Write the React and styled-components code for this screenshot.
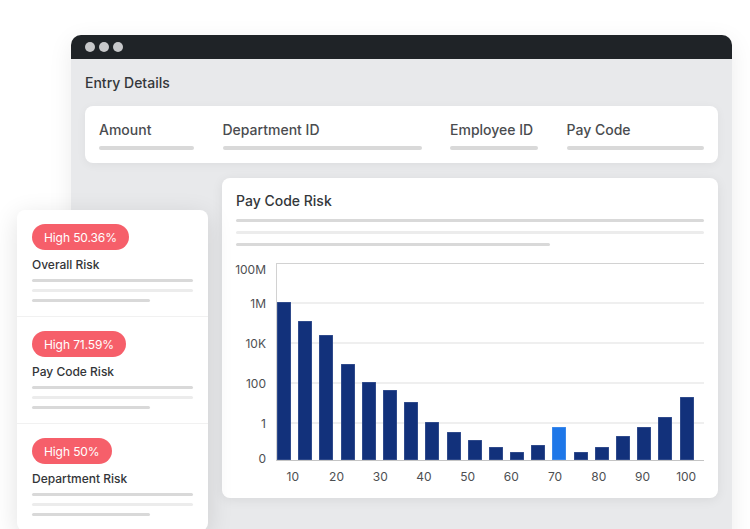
import React from 'react';
import styled, { createGlobalStyle } from 'styled-components';

const GlobalStyle = createGlobalStyle`
  html, body { margin: 0; padding: 0; background: #ffffff; }
  body { font-family: Inter, "Noto Sans", "Liberation Sans", sans-serif; }
  * { box-sizing: border-box; }
`;

const fields = [
  { label: 'Amount' },
  { label: 'Department ID' },
  { label: 'Employee ID' },
  { label: 'Pay Code' },
];

const risks = [
  { badge: 'High 50.36%', title: 'Overall Risk' },
  { badge: 'High 71.59%', title: 'Pay Code Risk' },
  { badge: 'High 50%', title: 'Department Risk' },
];

// bar heights in px above the baseline (log scale)
const bars = [158, 139, 125, 96, 78, 70, 58, 38, 28, 20, 13, 8, 15, 33, 8, 13, 24, 33, 43, 63];
const highlight = 13;

const yTicks = [
  { label: '100M', y: 7 },
  { label: '1M', y: 41 },
  { label: '10K', y: 81 },
  { label: '100', y: 121 },
  { label: '1', y: 161 },
  { label: '0', y: 196 },
];

const xTicks = [10, 20, 30, 40, 50, 60, 70, 80, 90, 100];

const App = () => {
  return (
    <Page>
      <GlobalStyle />
      <Window>
        <TitleBar>
          <Dot />
          <Dot />
          <Dot />
        </TitleBar>
        <Body>
          <Heading>Entry Details</Heading>
          <FieldCard>
            {fields.map((f) => (
              <Field key={f.label}>
                <FieldLabel>{f.label}</FieldLabel>
                <Line />
              </Field>
            ))}
          </FieldCard>
          <ChartCard>
            <CardTitle>Pay Code Risk</CardTitle>
            <Line $mt={9} />
            <Line $mt={9} $light $h={3} />
            <Line $mt={9} $w="314px" />
            <Chart>
              <YAxis>
                {yTicks.map((t) => (
                  <YTick key={t.label} $y={t.y}>{t.label}</YTick>
                ))}
              </YAxis>
              <PlotWrap>
                <Plot>
                  {bars.map((h, i) => (
                    <Bar key={i} $active={i === highlight} style={{ height: h }} />
                  ))}
                </Plot>
                <XAxis>
                  {xTicks.map((t) => (
                    <XTick key={t}>{t}</XTick>
                  ))}
                </XAxis>
              </PlotWrap>
            </Chart>
          </ChartCard>
        </Body>
      </Window>

      <RiskCard>
        {risks.map((r) => (
          <RiskSection key={r.title}>
            <Badge>{r.badge}</Badge>
            <RiskTitle>{r.title}</RiskTitle>
            <Line $mt={6} $h={3} />
            <Line $mt={7} $h={3} $light />
            <Line $mt={7} $h={3} $w="118px" />
          </RiskSection>
        ))}
      </RiskCard>
    </Page>
  );
};

export default App;

const Page = styled.div`
  position: relative;
  width: 750px;
  height: 529px;
  overflow: hidden;
  padding: 35px 0 0 71px;
  background: #ffffff;
`;

const Window = styled.div`
  width: 661px;
  height: 520px;
  border-radius: 10px 10px 0 0;
  background: #e8e9eb;
  box-shadow: 0 6px 24px rgba(0, 0, 0, 0.08);
  overflow: hidden;
`;

const TitleBar = styled.div`
  height: 24px;
  background: #1f2327;
  display: flex;
  align-items: center;
  gap: 4px;
  padding-left: 14px;
`;

const Dot = styled.span`
  width: 10px;
  height: 10px;
  border-radius: 50%;
  background: #c7c8ca;
`;

const Body = styled.div`
  padding: 15px 14px 0;
  display: flex;
  flex-direction: column;
`;

const Heading = styled.div`
  font-size: 14px;
  line-height: 18px;
  font-weight: 500;
  color: #34373a;
`;

const FieldCard = styled.div`
  margin-top: 14px;
  background: #ffffff;
  border-radius: 8px;
  padding: 15px 14px 13px;
  display: grid;
  grid-template-columns: 95px 199px 88px 1fr;
  column-gap: 28.5px;
  box-shadow: 0 2px 10px rgba(0, 0, 0, 0.05);
`;

const Field = styled.div`
  display: flex;
  flex-direction: column;
`;

const FieldLabel = styled.div`
  font-size: 14px;
  line-height: 18px;
  font-weight: 500;
  color: #4a4c4f;
`;

const Line = styled.div`
  margin-top: ${(p) => (p.$mt != null ? p.$mt : 7)}px;
  height: ${(p) => p.$h || 4}px;
  width: ${(p) => p.$w || '100%'};
  border-radius: 3px;
  background: ${(p) => (p.$light ? '#ececec' : '#d9d9d9')};
`;

const ChartCard = styled.div`
  margin: 15px 0 0 137px;
  height: 320px;
  background: #ffffff;
  border-radius: 8px;
  padding: 14px 14px;
  display: flex;
  flex-direction: column;
  box-shadow: 0 2px 12px rgba(0, 0, 0, 0.07);
`;

const CardTitle = styled.div`
  font-size: 14px;
  line-height: 18px;
  font-weight: 500;
  color: #34373a;
`;

const Chart = styled.div`
  margin-top: 17px;
  display: flex;
  gap: 10px;
`;

const YAxis = styled.div`
  position: relative;
  flex: 0 0 30px;
  height: 198px;
`;

const YTick = styled.span`
  position: absolute;
  right: 0;
  top: ${(p) => p.$y - 7}px;
  font-size: 12px;
  line-height: 14px;
  color: #4d4f52;
`;

const PlotWrap = styled.div`
  flex: 1;
  min-width: 0;
  display: flex;
  flex-direction: column;
`;

const Plot = styled.div`
  height: 198px;
  border-top: 1.5px solid #d2d2d2;
  border-left: 1.5px solid #d2d2d2;
  border-bottom: 1.5px solid #c4c4c4;
  background: repeating-linear-gradient(
    to bottom,
    transparent 0,
    transparent 38.5px,
    #efefef 38.5px,
    #efefef 40px
  );
  display: flex;
  align-items: flex-end;
  gap: 7.2px;
`;

const Bar = styled.div`
  width: 14px;
  flex: 0 0 14px;
  background: ${(p) => (p.$active ? '#1e77e8' : '#12317b')};
  box-shadow: inset 0 0 0 0.5px rgba(255, 255, 255, 0.25);
`;

const XAxis = styled.div`
  margin: 9px 0 0 -5px;
  width: calc(100% + 9px);
  display: grid;
  grid-template-columns: repeat(10, 1fr);
`;

const XTick = styled.span`
  text-align: center;
  font-size: 12px;
  line-height: 14px;
  color: #4d4f52;
`;

const RiskCard = styled.div`
  position: absolute;
  left: 17px;
  top: 210px;
  width: 191px;
  background: #ffffff;
  border-radius: 8px;
  box-shadow: 0 6px 26px rgba(0, 0, 0, 0.12);
`;

const RiskSection = styled.div`
  height: 107px;
  padding: 14px 15px 0 15px;
  display: flex;
  flex-direction: column;
  align-items: flex-start;
  border-bottom: 1.5px solid #f1f1f1;
  & > div { align-self: stretch; }
  & > div:last-child { align-self: flex-start; }
`;

const Badge = styled.span`
  display: inline-flex;
  align-items: center;
  height: 26px;
  padding: 0 12px;
  border-radius: 13px;
  background: #f65f6a;
  color: #ffffff;
  font-size: 12px;
  letter-spacing: -0.1px;
`;

const RiskTitle = styled.div`
  margin-top: 7px;
  font-size: 12px;
  line-height: 16px;
  font-weight: 500;
  color: #333538;
`;
